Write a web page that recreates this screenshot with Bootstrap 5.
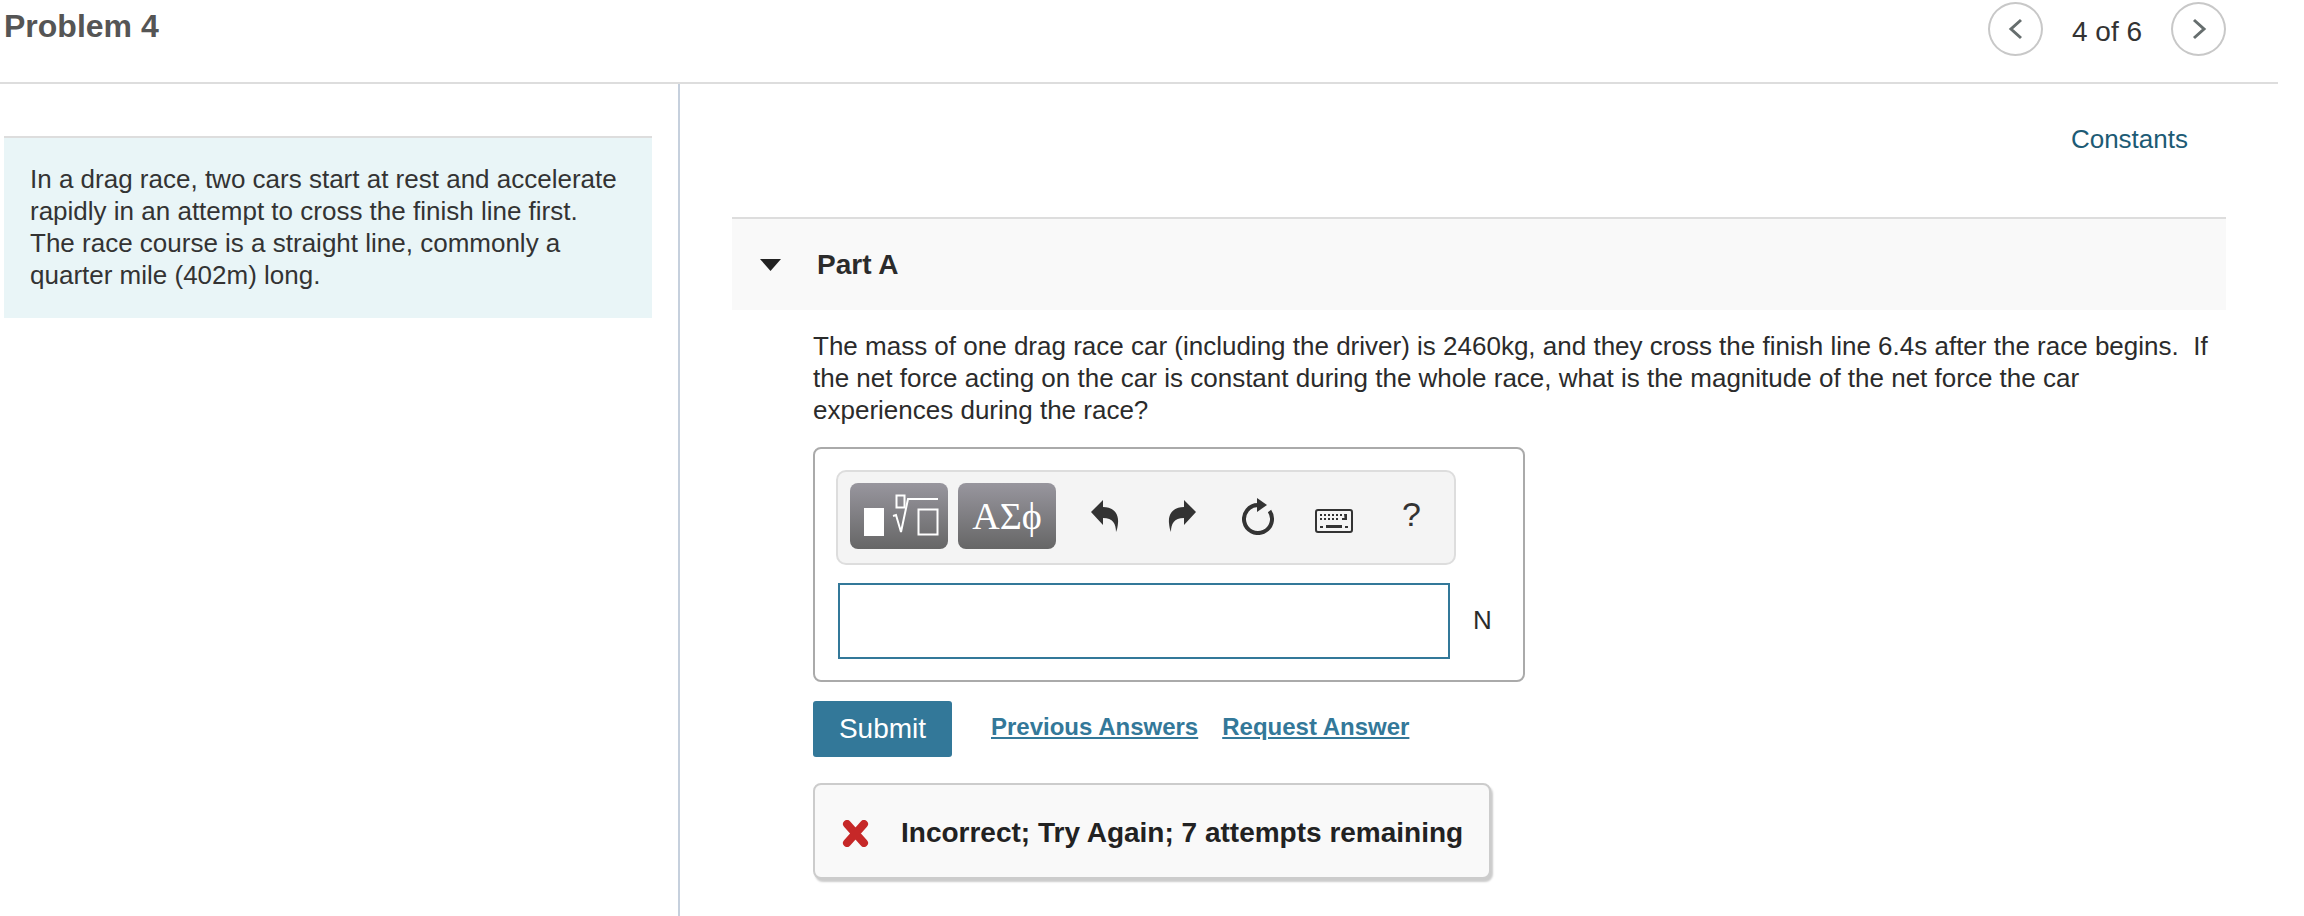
<!DOCTYPE html>
<html lang="en">
  <head>
    <meta charset="UTF-8" />
    <title>Problem 4</title>
    <link rel="stylesheet" href="https://cdn.jsdelivr.net/npm/bootstrap@5.3.0/dist/css/bootstrap.min.css" />
    <style>
      html, body { height: 916px; overflow: hidden; }
      body { font-family: "Liberation Sans", Arial, sans-serif; font-size: 26px; line-height: 32px; color: #2b2b2b; background: #fff; }
      .top-bar { width: 2278px; height: 84px; border-bottom: 2px solid #ddd; }
      .problem-title { margin: 8px 0 0 4px; font-size: 32px; line-height: 36px; font-weight: 700; color: #555; }
      .pager { width: 238px; margin: 2px 52px 0 0; height: 54px; }
      .pager-btn { width: 55px; height: 54px; border: 2px solid #c8c8c8; border-radius: 50%; background: #fff; padding: 0; }
      .pager-text { font-size: 28px; line-height: 32px; margin-top: 14px; color: #333; }
      .split { height: 832px; }
      .left-pane { width: 680px; border-right: 2px solid #c6d0dd; padding: 52px 26px 0 4px; flex: none; }
      .intro-box { height: 182px; background: #e9f5f7; border-top: 2px solid #ddd; padding: 25px 26px; color: #333; }
      .right-pane { width: 1546px; padding: 0 0 0 52px; flex: none; }
      .constants-row { height: 133px; padding: 39px 38px 0 0; }
      .constants-link { color: #1d5b75; text-decoration: none; font-size: 26px; }
      .part-head { height: 93px; background: #f9f9f9; border-top: 2px solid #ddd; padding-left: 28px; }
      .part-arrow { width: 21px; height: 12px; margin-right: 36px; }
      .part-name { font-weight: 700; font-size: 28px; }
      .part-body { padding: 20px 12px 0 81px; }
      .question { margin: 0 0 21px; }
      .answer-box { width: 712px; height: 235px; border: 2px solid #aaa; border-radius: 8px; padding: 21px 21px 0; }
      .tool-strip { width: 620px; height: 95px; background: #f4f4f4; border: 2px solid #ddd; border-radius: 10px; padding: 11px 0 0 12px; }
      .tpl-btn { width: 98px; height: 66px; border: 0; border-radius: 8px; padding: 0; background: linear-gradient(#98969e, #666); color: #fff; font-family: "Liberation Serif", serif; font-size: 38px; line-height: 58px; }
      .tpl-btn + .tpl-btn { margin-left: 10px; }
      .tool-undo { margin: 17px 0 0 35px; }
      .tool-redo { margin: 17px 0 0 49px; }
      .tool-reload { margin: 15px 0 0 46px; }
      .tool-keys { margin: 26px 0 0 40px; }
      .tool-help { color: #333; font-size: 34px; line-height: 34px; margin: 14px 0 0 49px; }
      .answer-input { width: 612px; height: 76px; border: 2px solid #337899; border-radius: 0; margin: 18px 0 0 2px; }
      .unit-text { font-size: 26px; margin: 16px 0 0 23px; }
      .action-row { margin-top: 19px; height: 56px; }
      .submit-btn { width: 139px; height: 56px; background: #337899; border: 0; border-radius: 3px; color: #fff; font-size: 28px; padding: 0; }
      .action-link { color: #337899; font-weight: 700; font-size: 24px; line-height: 32px; margin-top: 10px; text-decoration: underline; }
      .link-prev { margin-left: 39px; margin-right: 24px; }
      .feedback { width: 678px; height: 96px; margin-top: 26px; background: #f9f9f9; border: 2px solid #ccc; border-radius: 8px; box-shadow: 2px 3px 2px #ccc; padding: 4px 0 0 27px; font-weight: 700; font-size: 28px; color: #222; }
    </style>
  </head>
  <body>
    <div class="top-bar d-flex justify-content-between">
      <div class="problem-title">Problem 4</div>
      <div class="pager d-flex justify-content-between">
        <button class="pager-btn d-flex align-items-center justify-content-center" aria-label="Previous">
          <svg width="18" height="24" viewBox="0 0 18 24"><path d="M14 3 4 12l10 9" fill="none" stroke="#666e6e" stroke-width="3"/></svg>
        </button>
        <span class="pager-text">4 of 6</span>
        <button class="pager-btn d-flex align-items-center justify-content-center" aria-label="Next">
          <svg width="18" height="24" viewBox="0 0 18 24"><path d="M4 3l10 9-10 9" fill="none" stroke="#666e6e" stroke-width="3"/></svg>
        </button>
      </div>
    </div>
    <div class="split d-flex">
      <div class="left-pane">
        <div class="intro-box">In a drag race, two cars start at rest and accelerate rapidly in an attempt to cross the finish line first. The race course is a straight line, commonly a quarter mile (402m) long.</div>
      </div>
      <div class="right-pane">
        <div class="constants-row text-end"><a href="#" class="constants-link">Constants</a></div>
        <div class="part-head d-flex align-items-center">
          <svg class="part-arrow" viewBox="0 0 21 12"><path d="M0 0h21L10.500 12z" fill="#222"/></svg>
          <span class="part-name">Part A</span>
        </div>
        <div class="part-body">
          <p class="question">The mass of one drag race car (including the driver) is 2460kg, and they cross the finish line 6.4s after the race begins.&nbsp; If the net force acting on the car is constant during the whole race, what is the magnitude of the net force the car experiences during the race?</p>
          <div class="answer-box">
            <div class="tool-strip">
              <div class="d-flex align-items-start">
                <button class="tpl-btn" aria-label="Templates">
                  <svg width="98" height="66" viewBox="0 0 98 66"><rect x="14" y="25" width="20" height="28" fill="#fff"/><rect x="46.500" y="12.500" width="8" height="12" fill="none" stroke="#fff" stroke-width="2"/><path d="M43 33l3-1 5 17 7-33h30" fill="none" stroke="#fff" stroke-width="2"/><rect x="68.500" y="26.500" width="19" height="25" fill="none" stroke="#fff" stroke-width="2"/></svg>
                </button>
                <button class="tpl-btn">ΑΣϕ</button>
                <svg class="tool-undo" width="28" height="33" viewBox="0 0 28 33"><path d="M0 12 12 0v7c10 0 16 6 15 16-.3 4-1 7-2 9 0-8-3-14-13-14v7z" fill="#333"/></svg>
                <svg class="tool-redo" width="28" height="33" viewBox="0 0 28 33"><path d="M28 12 16 0v7C6 7 0 13 1 23c.3 4 1 7 2 9 0-8 3-14 13-14v7z" fill="#333"/></svg>
                <svg class="tool-reload" width="33" height="37" viewBox="0 0 33 37"><path d="M16 7a14 14 0 1 0 11.500 6" fill="none" stroke="#333" stroke-width="4"/><path d="M15 0l10 7-10 7z" fill="#333"/></svg>
                <svg class="tool-keys" width="38" height="24" viewBox="0 0 38 24"><rect x="1" y="1" width="36" height="22" rx="2" fill="#f4f4f4" stroke="#333" stroke-width="2"/><path d="M5 5h2v2H5zm4 0h2v2H9zm4 0h2v2h-2zm4 0h2v2h-2zm4 0h2v2h-2zm4 0h2v2h-2zm4 0h3v6h-5V9h2.500zM5 9h2v2H5zm4 0h2v2H9zm4 0h2v2h-2zm4 0h2v2h-2zm4 0h2v2h-2zM5 17h3v2H5zm6-1h16v3H11zm19 1h3v2h-3z" fill="#333"/></svg>
                <span class="tool-help">?</span>
              </div>
            </div>
            <div class="d-flex">
              <input class="answer-input form-control" type="text" aria-label="Answer" />
              <span class="unit-text align-self-center">N</span>
            </div>
          </div>
          <div class="action-row d-flex align-items-start">
            <button class="submit-btn">Submit</button>
            <a href="#" class="action-link link-prev">Previous Answers</a>
            <a href="#" class="action-link">Request Answer</a>
          </div>
          <div class="feedback d-flex align-items-center">
            <svg class="me-4 flex-shrink-0" width="27" height="27" viewBox="0 0 27 27"><path d="M5 4 22 23M22 4 5 23" stroke="#c62828" stroke-width="8" stroke-linecap="round"/></svg>
            <span class="ms-2">Incorrect; Try Again; 7 attempts remaining</span>
          </div>
        </div>
      </div>
    </div>
    <script src="https://cdn.jsdelivr.net/npm/bootstrap@5.3.0/dist/js/bootstrap.bundle.min.js"></script>
  </body>
</html>
